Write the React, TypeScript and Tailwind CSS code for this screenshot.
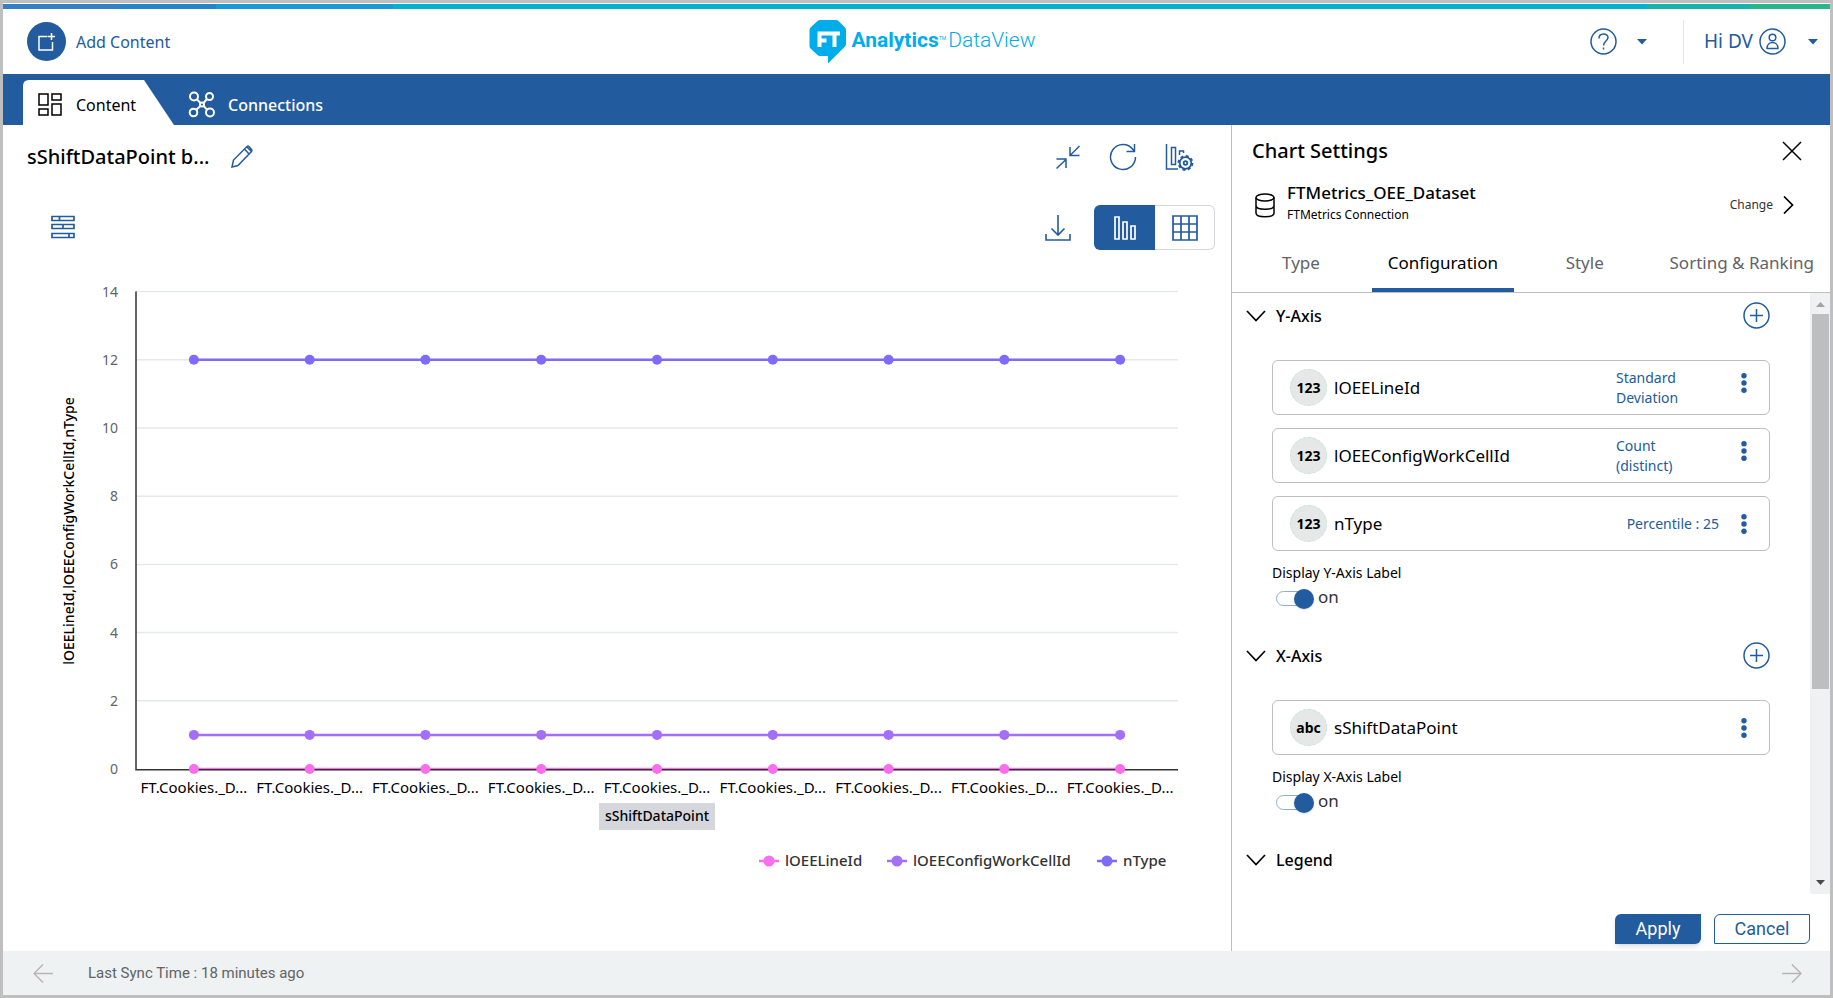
import { useState } from 'react';
import type { ReactNode } from 'react';

const BLUE = '#225b9e';

const series = [
  { name: 'nType', color: '#7f6bf8', value: 12 },
  { name: 'lOEEConfigWorkCellId', color: '#a36ef8', value: 1 },
  { name: 'lOEELineId', color: '#f96eec', value: 0 },
];

const yTicks = [0, 2, 4, 6, 8, 10, 12, 14];
const xTicks = Array.from({ length: 9 }, () => 'FT.Cookies._D...');

const tabs = ['Type', 'Configuration', 'Style', 'Sorting & Ranking'];

const Svg = ({ w, h, sw = 1.5, color = BLUE, children }: { w: number; h: number; sw?: number; color?: string; children: ReactNode }) => (
  <svg width={w} height={h} viewBox={`0 0 ${w} ${h}`} fill="none" stroke={color} strokeWidth={sw} aria-hidden="true" className="shrink-0">
    {children}
  </svg>
);

const Caret = () => (
  <svg width="10" height="6" viewBox="0 0 10 6" fill={BLUE} aria-hidden="true">
    <path d="M0 0h10L5 5.5z" />
  </svg>
);

const Logo = () => (
  <div className="flex items-start text-[#00adea]">
    <svg width="38" height="44" viewBox="0 0 38 44" aria-hidden="true">
      <path d="M11 0h16q1.500 0 2.500 1l6.500 6.500q1 1 1 2.500v14q0 1.500-1 2.500L19 43.500V36h-8q-1.500 0-2.500-1L1.500 28.500q-1-1-1-2.500V10q0-1.500 1-2.500L8.500 1q1-1 2.500-1z" fill="#00adea" />
      <path d="M10.500 27V13.500h9.500M10.500 20.500h7M18 13.500h13M25.500 13.500V27" fill="none" stroke="#fff" strokeWidth="4" />
    </svg>
    <div className="flex items-start pt-1 pl-1 font-['Roboto'] leading-8">
      <span className="text-[21px] font-bold">Analytics</span>
      <span className="pt-2 text-[5px] leading-3">TM</span>
      <span className="pl-0.5 text-[21px] font-light">DataView</span>
    </div>
  </div>
);

const Header = () => (
  <header className="flex h-[65px] items-center justify-between bg-white text-[#225b9e]">
    <div className="flex flex-1 items-center pl-6">
      <button type="button" className="flex items-center gap-2.5 text-base">
        <span className="flex size-[39px] items-center justify-center rounded-full bg-[#225b9e]">
          <Svg w={18} h={18} color="#fff">
            <path d="M9.500 3.500H1v13.500h13.500V9M13.500 0v7M10 3.500h7" />
          </Svg>
        </span>
        Add Content
      </button>
    </div>
    <Logo />
    <div className="flex flex-1 items-center justify-end pr-3">
      <button type="button" aria-label="Help" className="flex items-center gap-5">
        <Svg w={27} h={27}>
          <circle cx="13.500" cy="13.500" r="12.500" />
          <path d="M9 10.500c0-6 9-5.500 9-1 0 3.500-4.500 3.500-4.500 8M13.500 19.500v2" />
        </Svg>
        <Caret />
      </button>
      <div className="mr-5 ml-9 h-11 w-px bg-gray-200" />
      <button type="button" className="flex items-center gap-1.5 text-[19px]">
        Hi DV
        <Svg w={27} h={27}>
          <circle cx="13.500" cy="13.500" r="12.500" />
          <circle cx="13.500" cy="9.500" r="3.300" />
          <path d="M8 20.500c0-8 11-8 11 0z" strokeLinejoin="round" />
        </Svg>
        <span className="pl-4"><Caret /></span>
      </button>
    </div>
  </header>
);

const NavTabs = () => (
  <nav className="flex h-[51px] items-end bg-[#225b9e] pl-5 text-base">
    <a href="#content" className="relative flex h-[45px] w-[151px] items-center pl-[15px] text-black">
      <svg className="absolute inset-0" width="151" height="45" viewBox="0 0 151 45" aria-hidden="true">
        <path d="M0 45V6q0-6 6-6h115l30 45z" fill="#fff" />
      </svg>
      <span className="relative flex items-center gap-3.5 pt-1">
        <Svg w={24} h={23} color="#000">
          <path d="M1 1h9v11H1zM14 1h9v6h-9zM1 16h9v6H1zM14 11h9v11h-9z" />
        </Svg>
        Content
      </span>
    </a>
    <a href="#connections" className="flex h-[45px] items-center gap-3 pt-1 pl-3.5 font-medium text-white">
      <Svg w={28} h={27} color="#fff" sw={2}>
        <circle cx="6" cy="5.500" r="4" />
        <circle cx="21.500" cy="5.500" r="3.500" />
        <circle cx="5.500" cy="21.500" r="3.800" />
        <circle cx="22" cy="21.500" r="4" />
        <circle cx="14" cy="13.500" r="2" />
        <path d="M9 8.500l3.500 3.500M19 8l-3.500 4M8.500 18.500l4-3.500M19 18.500l-3.500-3.500" />
      </Svg>
      Connections
    </a>
  </nav>
);

const Toolbar = () => (
  <div className="flex h-16 items-center justify-between pr-9 pl-6">
    <div className="flex items-center gap-5">
      <h1 className="text-xl font-medium">sShiftDataPoint b...</h1>
      <button type="button" aria-label="Rename">
        <Svg w={24} h={24}>
          <path d="M2 22l1.500-7L17 1.500q1-.8 2 0L21.500 4.500q.8 1 0 2L8 20.500zM14.500 4l4.500 5M17 2l4.500 4.500" />
        </Svg>
      </button>
    </div>
    <div className="flex items-center gap-7">
      <button type="button" aria-label="Collapse">
        <Svg w={26} h={26}>
          <path d="M24.500 2L15.500 11M15 3v8.500h9.500M1.500 24.500l9.500-9M1.500 15H11v9" />
        </Svg>
      </button>
      <button type="button" aria-label="Refresh">
        <Svg w={28} h={28}>
          <path d="M26.500 14A12.500 12.500 0 1 1 24 6.500l1.500 2M25.500 1v7.500h-8" />
        </Svg>
      </button>
      <button type="button" aria-label="Chart options">
        <Svg w={30} h={28}>
          <path d="M1.500 1v25H13M6.500 4.500h4v17h-4zM14.500 12V8h4v2" />
          <circle cx="20.500" cy="20" r="5.800" strokeWidth="1.800" />
          <circle cx="20.500" cy="20" r="7" strokeWidth="1.800" strokeDasharray="3 2.500" />
          <circle cx="20.500" cy="20" r="1.800" strokeWidth="1.800" />
        </Svg>
      </button>
    </div>
  </div>
);

const ViewBar = () => (
  <div className="flex items-center justify-between pt-4 pr-4 pl-12">
    <button type="button" aria-label="Filters" className="pb-0.5">
      <Svg w={24} h={24} sw={1.700}>
        <path d="M1 1.500h22v4H1zM1 9.500h22v4H1zM1 18.500h22v4H1zM8.500 1v5M12 9v5M18 18v5" />
      </Svg>
    </button>
    <div className="flex items-center gap-[23px]">
      <button type="button" aria-label="Download">
        <Svg w={26} h={26} sw={1.600}>
          <path d="M13 0v20M6.500 13.500L13 20l6.500-6.500M1 19v6h24v-6" />
        </Svg>
      </button>
      <div className="flex h-[45px]">
        <button type="button" aria-label="Chart view" className="flex w-[61px] items-center justify-center rounded-l-md bg-[#225b9e]">
          <Svg w={24} h={24} color="#fff" sw={1.700}>
            <path d="M2 1h4v22H2zM10 6h4v17h-4zM18 10h4v13h-4z" />
          </Svg>
        </button>
        <button type="button" aria-label="Table view" className="flex w-[60px] items-center justify-center rounded-r-md border border-l-0 border-[#d6d7dc]">
          <Svg w={26} h={26} sw={1.700}>
            <path d="M1 1h24v24H1zM9 1v24M17 1v24M1 9h24M1 17h24" />
          </Svg>
        </button>
      </div>
    </div>
  </div>
);

const LineChart = () => {
  const left = 133;
  const right = 1175;
  const base = 499;
  const y = (v: number) => base - v * 34.1;
  const step = (right - left) / xTicks.length;
  const x = (i: number) => left + step * (i + 0.5);

  return (
    <svg viewBox="0 0 1228 630" className="mt-5 w-full" role="img" aria-label="lOEELineId,lOEEConfigWorkCellId,nType by sShiftDataPoint">
      {yTicks.map((t) => (
        <g key={t}>
          {t > 0 && <line x1={left} x2={right} y1={y(t)} y2={y(t)} stroke="#e6e9e9" strokeWidth="1.500" />}
          <text x="115" y={y(t) + 5} textAnchor="end" fontSize="14" fill="#626366">{t}</text>
        </g>
      ))}
      {series.map((s) => (
        <line key={s.name} x1={x(0)} x2={x(8)} y1={y(s.value)} y2={y(s.value)} stroke={s.color} strokeWidth="2.500" />
      ))}
      <path d={`M${left} ${y(14)}V${base + 0.8}H${right}`} fill="none" stroke="#333" strokeWidth="1.500" />
      {series.map((s) => (
        <g key={s.name} fill={s.color}>
          {xTicks.map((_, i) => (
            <circle key={i} cx={x(i)} cy={y(s.value)} r="5" />
          ))}
        </g>
      ))}
      {xTicks.map((t, i) => (
        <text key={i} x={x(i)} y={base + 24} textAnchor="middle" fontSize="15">{t}</text>
      ))}
      <text transform="translate(71 261) rotate(-90)" textAnchor="middle" fontSize="14" fontWeight="500">
        lOEELineId,lOEEConfigWorkCellId,nType
      </text>
      <rect x="596" y="533" width="116" height="27" fill="#d6d7dc" />
      <text x="654" y="551" textAnchor="middle" fontSize="14" fontWeight="500">sShiftDataPoint</text>
      {[
        { s: series[2], at: 756 },
        { s: series[1], at: 884 },
        { s: series[0], at: 1094 },
      ].map(({ s, at }) => (
        <g key={s.name}>
          <line x1={at} x2={at + 20} y1="591" y2="591" stroke={s.color} strokeWidth="2.500" />
          <circle cx={at + 10} cy="591" r="5.500" fill={s.color} />
          <text x={at + 26} y="596" fontSize="15" fontWeight="500" fill="#333">{s.name}</text>
        </g>
      ))}
    </svg>
  );
};

const SectionHead = ({ title, add = true }: { title: string; add?: boolean }) => (
  <div className="flex h-[46px] items-center justify-between pr-10 pl-3.5">
    <button type="button" className="flex items-center gap-2.5 text-base font-medium">
      <Svg w={20} h={12} color="#000" sw={1.700}>
        <path d="M1 1l9 9.500L19 1" />
      </Svg>
      {title}
    </button>
    {add && (
      <button type="button" aria-label={`Add ${title} field`} className="pb-0.5">
        <Svg w={27} h={27}>
          <circle cx="13.500" cy="13.500" r="12.500" />
          <path d="M13.500 7v13M7 13.500h13" />
        </Svg>
      </button>
    )}
  </div>
);

const FieldCard = ({ kind, name, agg }: { kind: string; name: string; agg?: string }) => {
  const single = agg?.startsWith('Percentile');
  return (
    <div className="flex h-[55px] items-center rounded-md border border-[#bebec0] pr-[18px] pl-[17px]">
      <span className="flex size-[37px] items-center justify-center rounded-full border border-dashed border-[#bfe5d9] bg-[#e6e7e7] text-sm font-bold">
        {kind}
      </span>
      <span className="flex-1 pl-[7px] text-[17px]">{name}</span>
      {agg && (
        <span className={`text-sm leading-5 text-[#225b9e] ${single ? 'pr-[18px]' : 'w-[121px] pr-10'}`}>{agg}</span>
      )}
      <button type="button" aria-label={`${name} options`} className={agg && !single ? 'pb-2.5' : ''}>
        <svg width="14" height="20" viewBox="0 0 14 20" fill={BLUE} aria-hidden="true">
          <circle cx="7" cy="2.700" r="2.700" />
          <circle cx="7" cy="10" r="2.700" />
          <circle cx="7" cy="17.300" r="2.700" />
        </svg>
      </button>
    </div>
  );
};

const LabelToggle = ({ id, label }: { id: string; label: string }) => {
  const [on, setOn] = useState(true);
  return (
    <div className="pt-3">
      <label htmlFor={id} className="block text-sm leading-5">{label}</label>
      <div className="flex h-8 items-center gap-1 pl-1">
        <span className="relative h-5 w-[38px]">
          <input
            id={id}
            type="checkbox"
            checked={on}
            onChange={(e) => setOn(e.target.checked)}
            className="peer absolute top-0.5 left-0 h-[15px] w-8 appearance-none rounded-full border border-[#90add0]"
          />
          <span className="pointer-events-none absolute top-0 left-0 size-5 rounded-full bg-[#225b9e] shadow peer-checked:left-[18px]" />
        </span>
        <span className="pb-1 text-[17px] text-[#333]">{on ? 'on' : 'off'}</span>
      </div>
    </div>
  );
};

const ScrollRail = () => (
  <div className="flex w-5 shrink-0 flex-col items-center bg-[#eef2f3]" aria-hidden="true">
    <svg width="9" height="21" viewBox="0 0 9 21" fill="#a2a3a6"><path d="M0 14l4.500-5 4.500 5z" /></svg>
    <div className="h-[375px] w-[17px] bg-[#bdbec0]" />
    <svg className="mt-auto" width="9" height="18" viewBox="0 0 9 18" fill="#4a4a4a"><path d="M0 4l4.500 5L9 4z" /></svg>
  </div>
);

const SettingsPanel = () => {
  const [active, setActive] = useState('Configuration');

  return (
    <aside className="flex w-[599px] shrink-0 flex-col border-l border-[#bfbfbf]">
      <div className="flex h-[52px] items-center justify-between pr-7 pl-5">
        <h2 className="text-xl font-medium">Chart Settings</h2>
        <button type="button" aria-label="Close">
          <Svg w={20} h={20} color="#000"><path d="M1 1l18 18M19 1L1 19" /></Svg>
        </button>
      </div>
      <div className="flex h-[60px] items-center pr-9 pb-1 pl-[23px]">
        <Svg w={20} h={25} color="#000">
          <ellipse cx="10" cy="4.500" rx="9" ry="3.500" />
          <path d="M1 4.500v15.500c0 5 18 5 18 0V4.500M1 12.500c0 5 18 5 18 0" />
        </Svg>
        <div className="flex-1 pb-1 pl-3">
          <p className="text-[17px] leading-6 font-medium">FTMetrics_OEE_Dataset</p>
          <p className="text-xs leading-5">FTMetrics Connection</p>
        </div>
        <button type="button" className="flex items-center gap-2.5 text-xs text-[#333]">
          Change
          <Svg w={11} h={18} color="#000" sw={1.700}><path d="M1 0.500l8.500 8.500L1 17.500" /></Svg>
        </button>
      </div>
      <div className="flex h-14 shrink-0 justify-between border-b border-[#bfbfbf] pr-0.5 text-[17px]">
        {tabs.map((t) => (
          <button
            key={t}
            type="button"
            onClick={() => setActive(t)}
            className={
              t === active
                ? 'w-[142px] border-b-4 border-[#225b9e] text-black'
                : 'min-w-[138px] border-b-4 border-transparent px-3.5 text-[#626366]'
            }
          >
            {t}
          </button>
        ))}
      </div>
      <div className="flex min-h-0 flex-1">
        <div className="flex-1 overflow-hidden">
          <SectionHead title="Y-Axis" />
          <div className="pt-[21px] pr-10 pl-10">
            <div className="flex flex-col gap-[13px]">
              <FieldCard kind="123" name="lOEELineId" agg="Standard Deviation" />
              <FieldCard kind="123" name="lOEEConfigWorkCellId" agg="Count (distinct)" />
              <FieldCard kind="123" name="nType" agg="Percentile : 25" />
            </div>
            <LabelToggle id="y-label" label="Display Y-Axis Label" />
          </div>
          <div className="pt-[18px]">
            <SectionHead title="X-Axis" />
          </div>
          <div className="pt-[21px] pr-10 pl-10">
            <FieldCard kind="abc" name="sShiftDataPoint" />
            <LabelToggle id="x-label" label="Display X-Axis Label" />
          </div>
          <div className="pt-[18px]">
            <SectionHead title="Legend" add={false} />
          </div>
        </div>
        <ScrollRail />
      </div>
      <div className="flex h-[57px] shrink-0 items-center justify-end gap-[13px] pt-3 pr-5 font-['Roboto'] text-lg">
        <button type="button" className="h-[30px] w-[86px] rounded-tl-md rounded-br-md bg-[#225b9e] leading-7 text-white shadow-md">Apply</button>
        <button type="button" className="h-[30px] w-24 rounded-tl-md rounded-br-md border border-[#225b9e] leading-6 text-[#225b9e]">Cancel</button>
      </div>
    </aside>
  );
};

const Footer = () => (
  <footer className="flex h-11 items-center justify-between bg-[#eef2f3] pr-7 pl-[30px] font-['Roboto'] text-[15px] text-[#626366]">
    <div className="flex items-center gap-[35px]">
      <button type="button" aria-label="Previous">
        <Svg w={20} h={19} color="#b5b6b8"><path d="M20 9.500H1M10 0.500l-9 9 9 9" /></Svg>
      </button>
      Last Sync Time : 18 minutes ago
    </div>
    <button type="button" aria-label="Next">
      <Svg w={20} h={19} color="#b5b6b8"><path d="M0 9.500h19M10 0.500l9 9-9 9" /></Svg>
    </button>
  </footer>
);

const App = () => {
  return (
    <div className="flex min-h-screen flex-col border-[3px] border-[#bfbfbf] bg-white font-['Noto_Sans',sans-serif] text-black">
      <div className="mt-px flex h-[5px]">
        <div className="w-[115px] bg-[#3580c4]" />
        <div className="w-[98px] bg-[#2684cb]" />
        <div className="w-[177px] bg-[#1a99d8]" />
        <div className="flex-1 bg-[#00b2cf]" />
        <div className="w-[104px] bg-[#19b4a9]" />
        <div className="w-[79px] bg-[#2bb58c]" />
      </div>
      <Header />
      <NavTabs />
      <div className="flex flex-1">
        <main className="min-w-0 flex-1">
          <Toolbar />
          <ViewBar />
          <LineChart />
        </main>
        <SettingsPanel />
      </div>
      <Footer />
    </div>
  );
};

export default App;
